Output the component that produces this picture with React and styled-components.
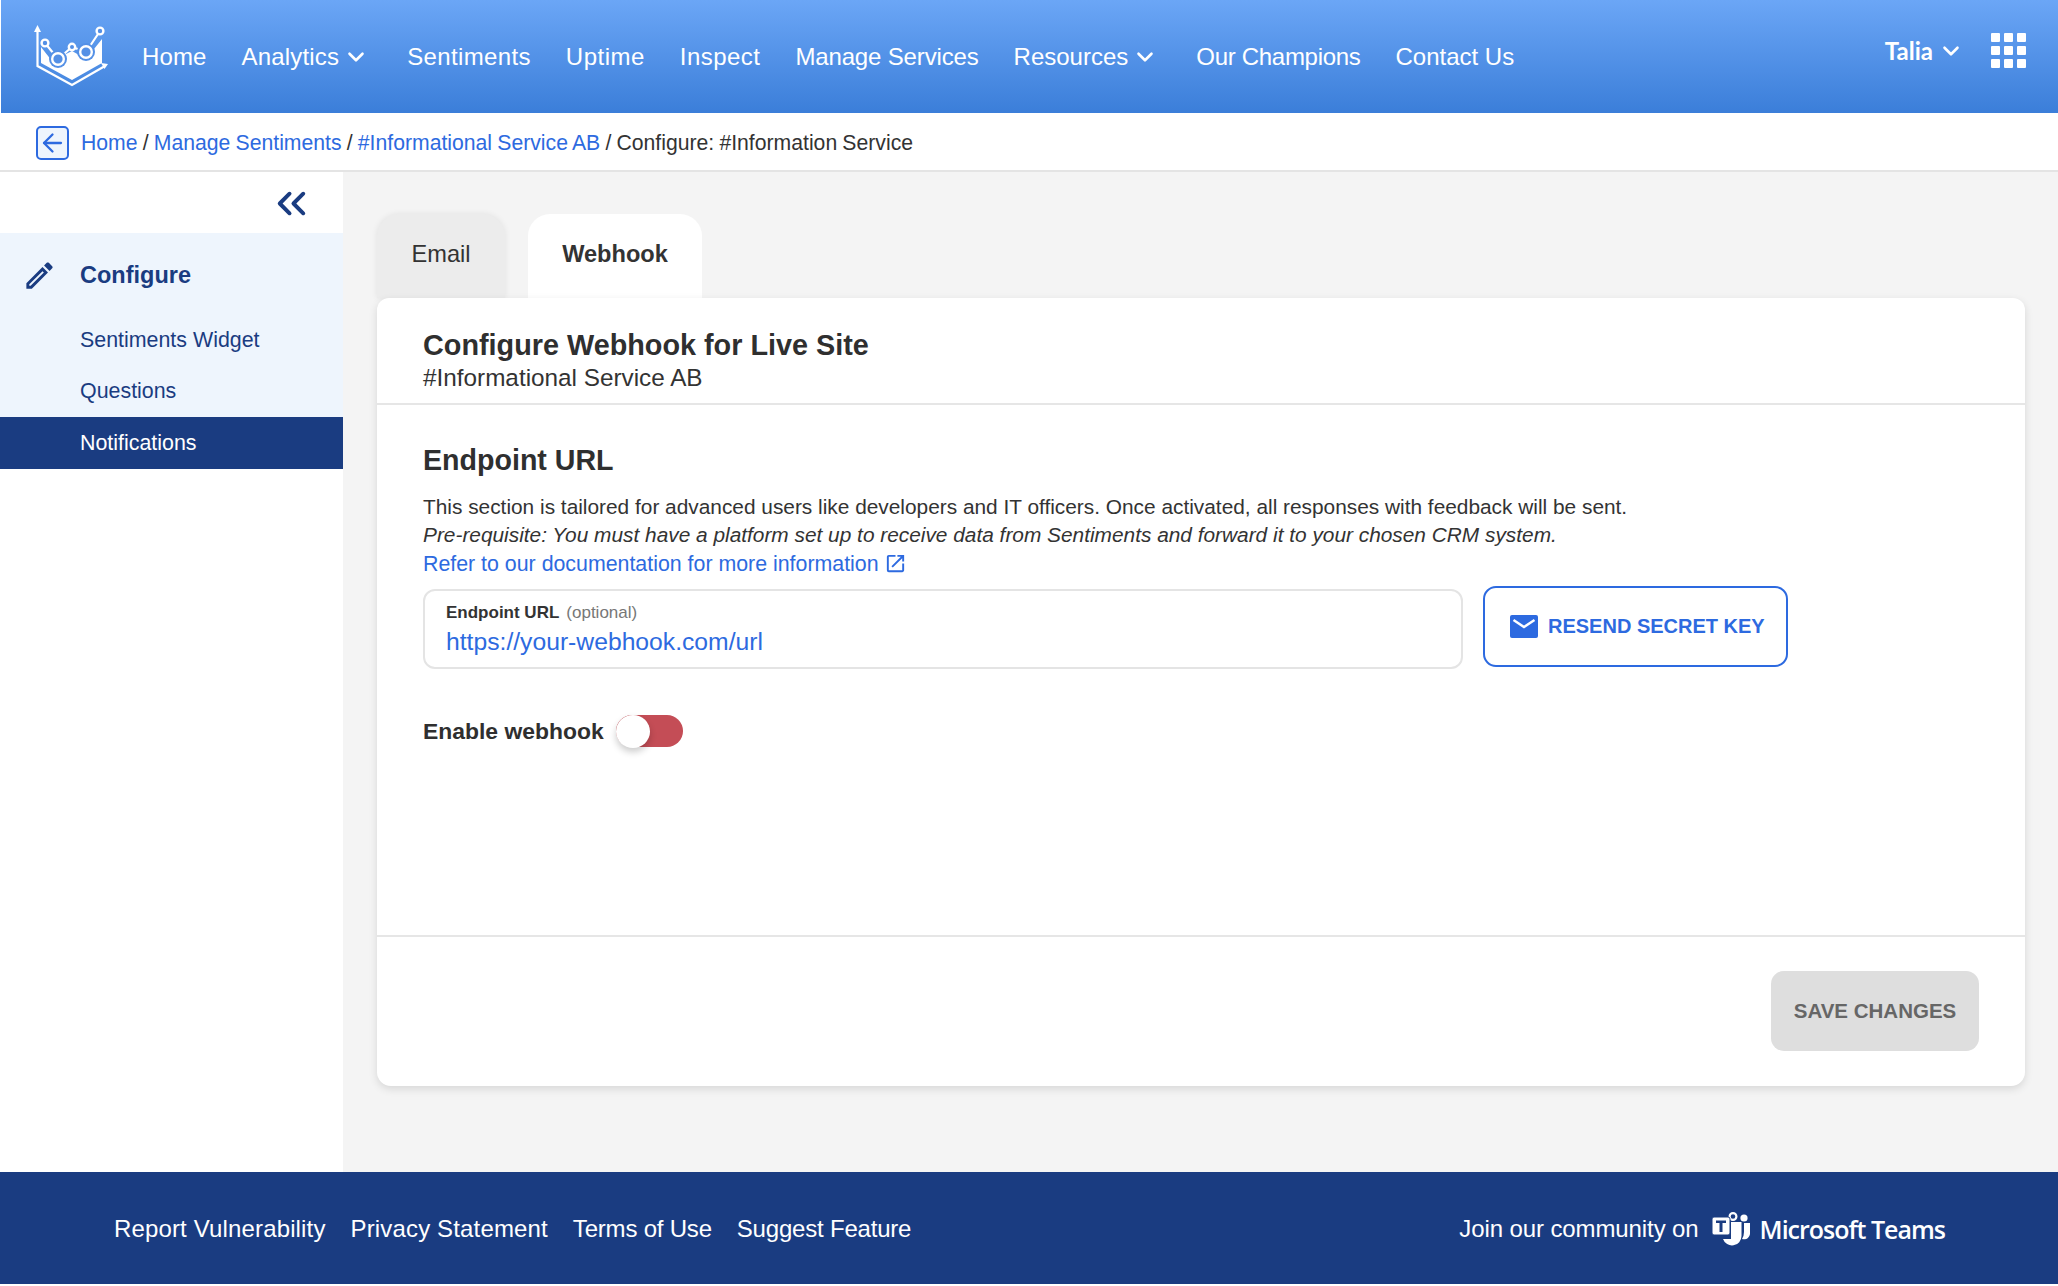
import React from 'react';
import styled, { createGlobalStyle } from 'styled-components';
import { ChevronDown, ChevronsLeft, ArrowLeft } from 'lucide-react';
import { MdOutlineEdit, MdOpenInNew } from 'react-icons/md';

const GlobalStyle = createGlobalStyle`
  html, body {
    margin: 0;
    padding: 0;
    background: #fff;
  }
  body {
    font-family: "Liberation Sans", Arial, sans-serif;
    color: #333;
  }
  * { box-sizing: border-box; }
`;

const Page = styled.div`
  width: 2058px;
  height: 1286px;
  display: flex;
  flex-direction: column;
  overflow: hidden;
`;

const Header = styled.header`
  height: 113px;
  flex: none;
  margin-left: 1px;
  padding: 0 32px 0 35px;
  display: flex;
  align-items: center;
  background: linear-gradient(180deg, #6ba6f6 0%, #3b7ed9 100%);
  color: #fff;
`;

const Logo = styled.svg`
  width: 72px;
  height: 62px;
  flex: none;
  margin-right: 34px;
  overflow: visible;
`;

const Nav = styled.nav`
  display: flex;
  align-items: center;
  gap: 35px;
  flex: 1;
`;

const NavItem = styled.a`
  display: flex;
  align-items: center;
  gap: 4px;
  font-size: 24px;
  letter-spacing: ${(p) => p.$spacing}px;
  white-space: nowrap;
  margin-right: ${(p) => (p.$menu ? '3px' : '0')};
`;

const UserMenu = styled.div`
  display: flex;
  align-items: center;
  gap: 5px;
  margin-right: 27px;
  margin-bottom: 12px;
  font: 700 24px Lato, sans-serif;
`;

const AppGrid = styled.div`
  display: grid;
  grid-template-columns: repeat(3, 9px);
  grid-auto-rows: 9px;
  gap: 4px;
  margin-bottom: 12px;

  span {
    background: #fff;
    border-radius: 1px;
  }
`;

const Breadcrumb = styled.div`
  height: 59px;
  flex: none;
  padding: 0 36px 0 36px;
  display: flex;
  align-items: center;
  gap: 12px;
  font-size: 21.2px;
  word-spacing: -0.7px;
  box-shadow: inset 0 -2px 0 #e4e4e4;
  white-space: nowrap;
`;

const BackButton = styled.button`
  width: 33px;
  height: 34px;
  padding: 0;
  flex: none;
  display: flex;
  align-items: center;
  justify-content: center;
  background: #eef5fd;
  border: 2px solid #2d6ae0;
  border-radius: 5px;
  color: #2d6ae0;
`;

const Crumb = styled.a`
  color: #2d6ae0;
`;

const Body = styled.div`
  flex: 1;
  display: flex;
  min-height: 0;
`;

const Sidebar = styled.aside`
  width: 343px;
  flex: none;
`;

const CollapseRow = styled.div`
  height: 61px;
  padding: 1px 28px 0 0;
  display: flex;
  align-items: center;
  justify-content: flex-end;
  color: #1a3c81;
`;

const SideGroup = styled.div`
  height: 184px;
  background: #eef5fd;
  padding-top: 18px;
`;

const SideTitle = styled.div`
  height: 48px;
  padding-left: 22px;
  display: flex;
  align-items: center;
  gap: 23px;
  font-size: 23.5px;
  font-weight: 700;
  color: #1a3c81;
  margin-bottom: 16px;
`;

const SideItem = styled.a`
  display: flex;
  align-items: center;
  height: ${(p) => (p.$active ? '52px' : '51px')};
  padding-left: 80px;
  padding-top: ${(p) => (p.$active ? '1px' : '0')};
  font-size: 21.4px;
  color: ${(p) => (p.$active ? '#fff' : '#1a3c81')};
  background: ${(p) => (p.$active ? '#1a3c81' : 'transparent')};
`;

const Main = styled.main`
  flex: 1;
  background: #f4f4f4;
  padding: 42px 33px 0 34px;
`;

const Tabs = styled.div`
  display: flex;
  gap: 23px;
  height: 84px;
`;

const Tab = styled.div`
  width: ${(p) => (p.$active ? '174px' : '128px')};
  height: 84px;
  padding-top: 27px;
  text-align: center;
  font-size: 23.6px;
  font-weight: ${(p) => (p.$active ? 700 : 400)};
  background: ${(p) => (p.$active ? '#fff' : '#ececec')};
  border-radius: 22px 22px 0 0;
  box-shadow: ${(p) => (p.$active ? 'none' : '0 0 6px rgba(0, 0, 0, 0.08)')};
`;

const Card = styled.section`
  position: relative;
  height: 788px;
  display: flex;
  flex-direction: column;
  background: #fff;
  border-radius: 12px 12px 14px 14px;
  box-shadow: 0 3px 8px rgba(0, 0, 0, 0.12);
`;

const CardHead = styled.div`
  height: 107px;
  flex: none;
  padding: 28px 46px 0;
  border-bottom: 2px solid #e6e6e6;
`;

const CardTitle = styled.h1`
  margin: 0;
  font-size: 28.8px;
  line-height: 38px;
  font-weight: 700;
  color: #2f2f2f;
`;

const CardSub = styled.div`
  font-size: 24.3px;
  line-height: 28px;
`;

const CardBody = styled.div`
  flex: 1;
  padding: 36px 46px 0;
  border-bottom: 2px solid #e6e6e6;
`;

const SectionTitle = styled.h2`
  margin: 0 0 14px;
  font-size: 28.6px;
  line-height: 38px;
  font-weight: 700;
  color: #2f2f2f;
`;

const Para = styled.p`
  margin: 0;
  font-size: 20.85px;
  line-height: 28.4px;
  font-style: ${(p) => (p.$em ? 'italic' : 'normal')};
  white-space: nowrap;
`;

const DocLink = styled.a`
  display: inline-flex;
  align-items: center;
  gap: 5px;
  font-size: 21.35px;
  line-height: 28px;
  color: #2d6ae0;
`;

const FieldRow = styled.div`
  display: flex;
  align-items: flex-start;
  gap: 20px;
  margin-top: 12px;
`;

const Field = styled.div`
  width: 1040px;
  height: 80px;
  margin-top: -1px;
  padding: 11px 21px 0;
  border: 2px solid #e4e4e4;
  border-radius: 12px;
`;

const FieldLabel = styled.div`
  font-size: 17px;
  line-height: 22px;
  font-weight: 700;

  span {
    margin-left: 7px;
    font-weight: 400;
    color: #777;
  }
`;

const FieldValue = styled.div`
  margin-top: 1px;
  font-size: 24.7px;
  line-height: 34px;
  color: #2d6ae0;
`;

const OutlineButton = styled.button`
  width: 305px;
  height: 81px;
  margin-top: -4px;
  padding: 0 0 0 25px;
  display: flex;
  align-items: center;
  gap: 10px;
  background: #fff;
  border: 2px solid #2d6ae0;
  border-radius: 13px;
  color: #2d6ae0;
  font: 700 20px "Liberation Sans", Arial, sans-serif;
  white-space: nowrap;
`;

const ToggleRow = styled.div`
  display: flex;
  align-items: center;
  gap: 12px;
  margin-top: 46px;
  font-size: 22.9px;
  font-weight: 700;
  color: #2f2f2f;
`;

const ToggleLabel = styled.span`
  padding-top: 2px;
`;

const Track = styled.div`
  position: relative;
  width: 67px;
  height: 32px;
  border-radius: 16px;
  background: #c44d56;
`;

const Knob = styled.div`
  position: absolute;
  left: 0;
  top: 0;
  width: 34px;
  height: 33px;
  border-radius: 50%;
  background: #fff;
  box-shadow: 0 4px 7px rgba(0, 0, 0, 0.2);
`;

const CardFoot = styled.div`
  height: 149px;
  flex: none;
  padding: 34px 46px 0 0;
  display: flex;
  justify-content: flex-end;
`;

const SaveButton = styled.button`
  width: 208px;
  height: 80px;
  background: #dedede;
  border: none;
  border-radius: 13px;
  color: #666;
  font: 700 20.5px "Liberation Sans", Arial, sans-serif;
  white-space: nowrap;
`;

const Footer = styled.footer`
  height: 112px;
  flex: none;
  margin-bottom: 2px;
  padding: 2px 113px 0 114px;
  display: flex;
  align-items: center;
  justify-content: space-between;
  background: #1a3c81;
  color: #fff;
  font-size: 24px;
`;

const FooterLinks = styled.div`
  display: flex;
  gap: 25px;
  white-space: nowrap;
`;

const FooterLink = styled.a`
  letter-spacing: ${(p) => (p.$tight ? '-0.2px' : '0.15px')};
`;

const Community = styled.div`
  display: flex;
  align-items: center;
  letter-spacing: -0.1px;
  white-space: nowrap;
`;

const TeamsIcon = styled.svg`
  width: 38px;
  height: 34px;
  margin: 0 10px 0 13px;
`;

const TeamsName = styled.span`
  font: 600 25px "Open Sans", sans-serif;
  letter-spacing: -1px;
`;

// coordinates are the page's own pixels, measured from the reference
const LogoMark = () => (
  <Logo viewBox="36 25 72 62">
    <g fill="none" stroke="#fff" strokeWidth="2.2">
      <path d="M37.5 28 V65 L72 84 L105 65" />
      <path d="M45 42 L58 58 M58 58 L72 46 L86 51 L100 30" />
    </g>
    <path d="M37.5 24 L41 31 L34 31 Z" fill="#fff" />
    <path d="M108 63 L101 62 L104.5 68 Z" fill="#fff" />
    <path d="M41 46 L52 60 L72 50 L86 58 L102 38 V62 L72 79 L41 62 Z" fill="#fff" />
    <g fill="#5490e6">
      <circle cx="58" cy="58" r="9" />
      <circle cx="86" cy="51" r="9" />
    </g>
    <g fill="#5490e6" stroke="#fff" strokeWidth="2.4">
      <circle cx="45" cy="42" r="3.4" />
      <circle cx="58" cy="58" r="5.8" />
      <circle cx="72" cy="46" r="3.2" />
      <circle cx="86" cy="51" r="5.8" />
      <circle cx="100" cy="30" r="3.4" />
    </g>
  </Logo>
);

const MailIcon = () => (
  <svg width="28" height="23" viewBox="0 0 28 23">
    <rect width="28" height="23" rx="2" fill="#2d6ae0" />
    <path d="M3.5 5 L14 12 L24.5 5" fill="none" stroke="#fff" strokeWidth="2.4" />
  </svg>
);

const Teams = () => (
  <TeamsIcon viewBox="0 0 38 34">
    <circle cx="21" cy="4.5" r="3.4" fill="none" stroke="#fff" strokeWidth="2.2" />
    <circle cx="32" cy="6" r="3.6" fill="#fff" />
    <path d="M19 10 H29.5 V24 A9.5 9.5 0 0 1 11 27 H19 Z" fill="#fff" />
    <path d="M32 11 H38 V21 A6 6 0 0 1 30 27 Q32 24 32 20 Z" fill="#fff" />
    <rect x="0" y="5" width="18" height="18" rx="2" fill="#fff" stroke="#1a3c81" strokeWidth="1" />
    <path d="M4 8.5 H14 V11 H10.5 V20 H7.5 V11 H4 Z" fill="#1a3c81" />
  </TeamsIcon>
);

const navLinks = [
  { label: 'Home', spacing: 0.1 },
  { label: 'Analytics', spacing: 0.2, menu: true },
  { label: 'Sentiments', spacing: 0.35 },
  { label: 'Uptime', spacing: 0.5 },
  { label: 'Inspect', spacing: 0.45 },
  { label: 'Manage Services', spacing: -0.15 },
  { label: 'Resources', spacing: 0, menu: true },
  { label: 'Our Champions', spacing: -0.3 },
  { label: 'Contact Us', spacing: 0 },
];

const App = () => (
  <>
    <GlobalStyle />
    <Page>
      <Header>
        <LogoMark />
        <Nav>
          {navLinks.map((link) => (
            <NavItem key={link.label} $menu={link.menu} $spacing={link.spacing}>
              {link.label}
              {link.menu && <ChevronDown size={26} strokeWidth={2.4} />}
            </NavItem>
          ))}
        </Nav>
        <UserMenu>
          Talia
          <ChevronDown size={26} strokeWidth={2.4} />
        </UserMenu>
        <AppGrid>
          {Array.from({ length: 9 }).map((_, i) => (
            <span key={i} />
          ))}
        </AppGrid>
      </Header>

      <Breadcrumb>
        <BackButton>
          <ArrowLeft size={30} strokeWidth={1.9} />
        </BackButton>
        <div>
          <Crumb>Home</Crumb> / <Crumb>Manage Sentiments</Crumb> /{' '}
          <Crumb>#Informational Service AB</Crumb> / Configure: #Information Service
        </div>
      </Breadcrumb>

      <Body>
        <Sidebar>
          <CollapseRow>
            <ChevronsLeft size={47} strokeWidth={2} />
          </CollapseRow>
          <SideGroup>
            <SideTitle>
              <MdOutlineEdit size={35} />
              Configure
            </SideTitle>
            <SideItem>Sentiments Widget</SideItem>
            <SideItem>Questions</SideItem>
          </SideGroup>
          <SideItem $active>Notifications</SideItem>
        </Sidebar>

        <Main>
          <Tabs>
            <Tab>Email</Tab>
            <Tab $active>Webhook</Tab>
          </Tabs>
          <Card>
            <CardHead>
              <CardTitle>Configure Webhook for Live Site</CardTitle>
              <CardSub>#Informational Service AB</CardSub>
            </CardHead>
            <CardBody>
              <SectionTitle>Endpoint URL</SectionTitle>
              <Para>
                This section is tailored for advanced users like developers and IT officers. Once
                activated, all responses with feedback will be sent.
              </Para>
              <Para $em>
                Pre-requisite: You must have a platform set up to receive data from Sentiments and
                forward it to your chosen CRM system.
              </Para>
              <DocLink>
                Refer to our documentation for more information
                <MdOpenInNew size={23} />
              </DocLink>
              <FieldRow>
                <Field>
                  <FieldLabel>
                    Endpoint URL<span>(optional)</span>
                  </FieldLabel>
                  <FieldValue>https://your-webhook.com/url</FieldValue>
                </Field>
                <OutlineButton>
                  <MailIcon />
                  RESEND SECRET KEY
                </OutlineButton>
              </FieldRow>
              <ToggleRow>
                <ToggleLabel>Enable webhook</ToggleLabel>
                <Track>
                  <Knob />
                </Track>
              </ToggleRow>
            </CardBody>
            <CardFoot>
              <SaveButton>SAVE CHANGES</SaveButton>
            </CardFoot>
          </Card>
        </Main>
      </Body>

      <Footer>
        <FooterLinks>
          <FooterLink>Report Vulnerability</FooterLink>
          <FooterLink>Privacy Statement</FooterLink>
          <FooterLink $tight>Terms of Use</FooterLink>
          <FooterLink $tight>Suggest Feature</FooterLink>
        </FooterLinks>
        <Community>
          Join our community on
          <Teams />
          <TeamsName>Microsoft Teams</TeamsName>
        </Community>
      </Footer>
    </Page>
  </>
);

export default App;
